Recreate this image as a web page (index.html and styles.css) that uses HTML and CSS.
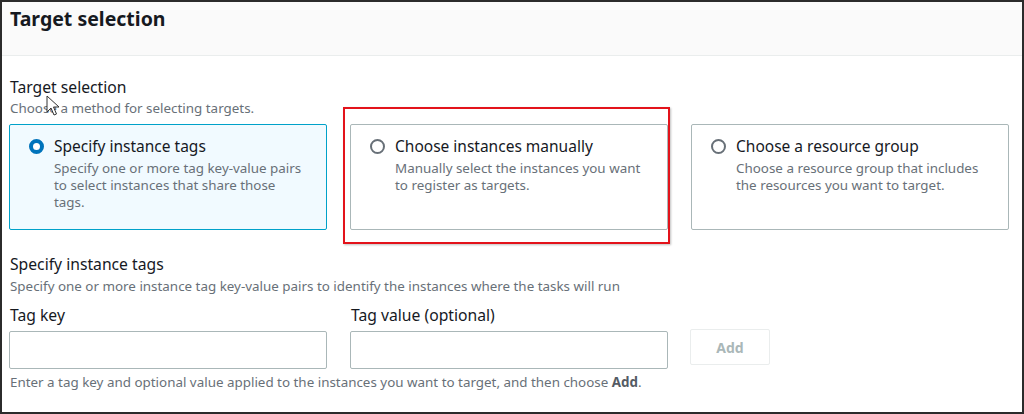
FILE: index.html
```html
<!DOCTYPE html>
<html lang="en">
  <head>
    <title>Target selection</title>
    <link rel="stylesheet" href="styles.css">
  </head>
  <body>
    <div class="panel">
      <div class="panel-header">
        <h2>Target selection</h2>
      </div>

      <div class="panel-body">
        <div class="field-label">Target selection</div>
        <div class="field-desc">Choose a method for selecting targets.</div>

        <div class="tiles">
          <label class="tile tile-selected">
            <span class="radio radio-checked"></span>
            <span class="tile-text">
              <span class="tile-title">Specify instance tags</span>
              <span class="tile-desc">Specify one or more tag key-value pairs to select instances that share those tags.</span>
            </span>
          </label>

          <div class="highlight">
            <label class="tile">
              <span class="radio"></span>
              <span class="tile-text">
                <span class="tile-title">Choose instances manually</span>
                <span class="tile-desc">Manually select the instances you want to register as targets.</span>
              </span>
            </label>
          </div>

          <label class="tile">
            <span class="radio"></span>
            <span class="tile-text">
              <span class="tile-title">Choose a resource group</span>
              <span class="tile-desc">Choose a resource group that includes the resources you want to target.</span>
            </span>
          </label>
        </div>

        <div class="field-label section-label">Specify instance tags</div>
        <div class="field-desc section-desc">Specify one or more instance tag key-value pairs to identify the instances where the tasks will run</div>

        <div class="tag-row">
          <div class="tag-field">
            <div class="field-label">Tag key</div>
            <input type="text" class="text-input" />
          </div>
          <div class="tag-field">
            <div class="field-label">Tag value (optional)</div>
            <input type="text" class="text-input" />
          </div>
          <button class="btn-add" disabled>Add</button>
        </div>

        <div class="field-desc help-text">Enter a tag key and optional value applied to the instances you want to target, and then choose <b>Add</b>.</div>
      </div>

      <!-- mouse pointer in the screenshot -->
      <svg class="cursor" width="14" height="22" viewBox="0 0 14 22">
        <path d="M1 1 L1 17 L5 13 L8 20 L10.5 19 L7.5 12 L13 12 Z" fill="#fff" stroke="#333" stroke-width="1" stroke-linejoin="round" />
      </svg>
    </div>
  </body>
</html>
```

FILE: styles.css
```css
body {
  margin: 0;
  font-family: "Noto Sans", "Open Sans", sans-serif;
  color: #16191f;
  background-color: #fff;
}

.panel {
  position: relative;
  width: 1024px;
  height: 414px;
  box-sizing: border-box;
  border: 2px solid #2b2b2b;
  overflow: hidden;
}

.panel-header {
  height: 54px;
  background-color: #fafafa;
  border-bottom: 1px solid #eaeded;
  padding: 3px 8px 0;
  box-sizing: border-box;
}

.panel-header h2 {
  margin: 0;
  font-size: 19.5px;
  font-weight: 700;
  line-height: 28px;
}

.panel-body {
  padding: 20px 7px 0;
}

.field-label {
  padding-left: 1px;
  font-size: 15.7px;
  line-height: 22px;
}

.field-desc {
  padding-left: 1px;
  font-size: 13.4px;
  line-height: 20px;
  color: #687078;
}

.field-desc b {
  color: #545b64;
}

.tiles {
  display: flex;
  gap: 23px;
  margin-top: 6px;
}

.tile {
  display: flex;
  gap: 10px;
  width: 318px;
  height: 106px;
  box-sizing: border-box;
  padding: 10px 20px 10px 19px;
  border: 1px solid #aab7b8;
  border-radius: 2px;
  background-color: #fff;
}

.tile-selected {
  border-color: #00a1c9;
  background-color: #f1faff;
}

.highlight {
  margin: -17px -2px -14px -7px;
  padding: 15px 0 12px 5px;
  border: 2px solid #e3131b;
  box-shadow: 1px 1px 2px rgba(0, 0, 0, 0.25);
}

.radio {
  flex: none;
  width: 15px;
  height: 15px;
  margin-top: 4px;
  box-sizing: border-box;
  border: 2px solid #687078;
  border-radius: 50%;
  background-color: #fff;
}

.radio-checked {
  border: 4px solid #0073bb;
}

.tile-text {
  display: flex;
  flex-direction: column;
}

.tile-title {
  font-size: 15.5px;
  line-height: 22px;
}

.tile-desc {
  margin-top: 3px;
  font-size: 13.4px;
  line-height: 17px;
  color: #687078;
}

.section-label {
  margin-top: 23px;
}

.section-desc {
  margin-top: 1px;
}

.tag-row {
  display: flex;
  align-items: flex-end;
  gap: 23px;
  margin-top: 8px;
}

.tag-field .field-label {
  margin-bottom: 5px;
}

.text-input {
  display: block;
  width: 318px;
  height: 38px;
  box-sizing: border-box;
  margin: 0;
  border: 1px solid #aab7b8;
  border-radius: 2px;
  outline: none;
}

.btn-add {
  width: 80px;
  height: 36px;
  margin-bottom: 4px;
  margin-left: -1px;
  border: 1px solid #eaeded;
  border-radius: 2px;
  background-color: #fff;
  color: #aab7b8;
  font-family: "Noto Sans", "Open Sans", sans-serif;
  font-size: 14px;
  font-weight: 700;
}

.help-text {
  margin-top: 3px;
}

.cursor {
  position: absolute;
  left: 44px;
  top: 93px;
}
```
